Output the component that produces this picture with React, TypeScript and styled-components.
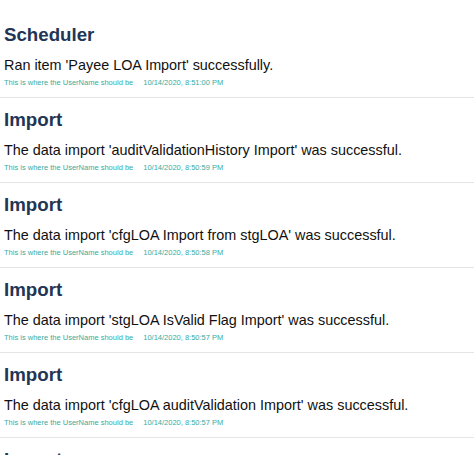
import styled, { createGlobalStyle } from "styled-components";

const GlobalStyle = createGlobalStyle`
  html, body {
    margin: 0;
    padding: 0;
    background: #ffffff;
  }
  body {
    font-family: "Liberation Sans", Arial, Helvetica, sans-serif;
  }
`;

type Notification = {
  title: string;
  message: string;
  user: string;
  date: string;
};

const notifications: Notification[] = [
  {
    title: "Scheduler",
    message: "Ran item 'Payee LOA Import' successfully.",
    user: "This is where the UserName should be",
    date: "10/14/2020, 8:51:00 PM",
  },
  {
    title: "Import",
    message: "The data import 'auditValidationHistory Import' was successful.",
    user: "This is where the UserName should be",
    date: "10/14/2020, 8:50:59 PM",
  },
  {
    title: "Import",
    message: "The data import 'cfgLOA Import from stgLOA' was successful.",
    user: "This is where the UserName should be",
    date: "10/14/2020, 8:50:58 PM",
  },
  {
    title: "Import",
    message: "The data import 'stgLOA IsValid Flag Import' was successful.",
    user: "This is where the UserName should be",
    date: "10/14/2020, 8:50:57 PM",
  },
  {
    title: "Import",
    message: "The data import 'cfgLOA auditValidation Import' was successful.",
    user: "This is where the UserName should be",
    date: "10/14/2020, 8:50:57 PM",
  },
  {
    title: "Import",
    message: "The data import 'cfgLOA Import' was successful.",
    user: "This is where the UserName should be",
    date: "10/14/2020, 8:50:56 PM",
  },
];

function App() {
  return (
    <>
      <GlobalStyle />
      <StyledList>
        {notifications.map((n, i) => (
          <StyledItem key={i} $first={i === 0}>
            <StyledTitle>{n.title}</StyledTitle>
            <StyledMessage>{n.message}</StyledMessage>
            <StyledMeta>
              <StyledUser>{n.user}</StyledUser>
              <span>{n.date}</span>
            </StyledMeta>
          </StyledItem>
        ))}
      </StyledList>
    </>
  );
}

export default App;

const StyledList = styled.div`
  display: flex;
  flex-direction: column;
  height: 455px;
  overflow: hidden;
`;

const StyledItem = styled.div<{ $first?: boolean }>`
  padding: ${(p) => (p.$first ? "24px" : "11px")} 4px 9px;
  border-bottom: 1px solid #e4e4e4;
  flex-shrink: 0;
`;

const StyledTitle = styled.h2`
  margin: 0;
  font-size: 18.7px;
  line-height: 22px;
  font-weight: 700;
  color: #223555;
`;

const StyledMessage = styled.div`
  margin-top: 10px;
  font-size: 14.4px;
  line-height: 18px;
  color: #111111;
`;

const StyledMeta = styled.div`
  margin-top: 4px;
  display: flex;
  font-size: 7.5px;
  line-height: 10px;
  color: #35aca3;
`;

const StyledUser = styled.span`
  margin-right: 10px;
`;
